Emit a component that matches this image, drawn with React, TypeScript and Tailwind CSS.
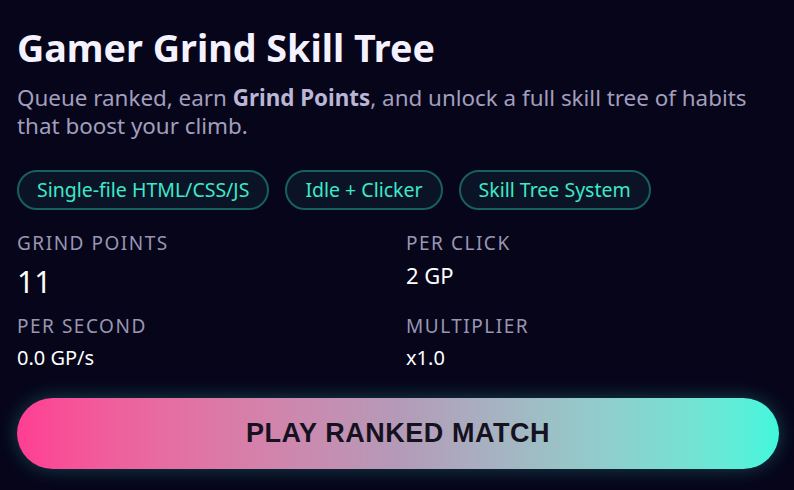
const tags = ["Single-file HTML/CSS/JS", "Idle + Clicker", "Skill Tree System"];

export default function App() {
  return (
    <div className="min-h-[490px] w-[794px] overflow-hidden bg-[#07051a] pl-[17px] pr-[15px] pt-[25px] font-['Noto_Sans',sans-serif] text-white">
      <h1 className="text-[37.7px] font-bold leading-[1.2] text-[#f4f2ff]">Gamer Grind Skill Tree</h1>
      <p className="mt-[14px] text-[22.4px] leading-[28px] text-[#a29fbd]">
        Queue ranked, earn <strong className="font-bold text-[#bab6d6]">Grind Points</strong>, and unlock a full skill tree of habits
        <br />
        that boost your climb.
      </p>

      <div className="mt-[30px] flex gap-[16px]">
        {tags.map((t) => (
          <span
            key={t}
            className="rounded-full border-2 border-[#17605f] bg-[#0a1426] px-[18px] py-[6px] text-[19.5px] leading-[24px] text-[#3ee8c9]"
          >
            {t}
          </span>
        ))}
      </div>

      <div className="mt-[21px] grid grid-cols-2 gap-x-[16px] gap-y-[14px]">
        <div>
          <div className="text-[19px] uppercase leading-[24px] tracking-[0.08em] text-[#9a96b2]">Grind Points</div>
          <div className="mt-[9px] text-[30px] leading-[36px] text-white">11</div>
        </div>
        <div>
          <div className="text-[19px] uppercase leading-[24px] tracking-[0.08em] text-[#9a96b2]">Per Click</div>
          <div className="mt-[5px] text-[22px] leading-[30px] text-white">2 GP</div>
        </div>
        <div>
          <div className="text-[19px] uppercase leading-[24px] tracking-[0.08em] text-[#9a96b2]">Per Second</div>
          <div className="mt-[6px] text-[20px] leading-[28px] text-white">0.0 GP/s</div>
        </div>
        <div>
          <div className="text-[19px] uppercase leading-[24px] tracking-[0.08em] text-[#9a96b2]">Multiplier</div>
          <div className="mt-[6px] text-[20px] leading-[28px] text-white">x1.0</div>
        </div>
      </div>

      <button className="mt-[26px] flex h-[71px] w-full items-center justify-center rounded-full bg-gradient-to-r from-[#ff3d93] via-[#b49ab8] to-[#3ff7dc] font-['Liberation_Sans',Arial,sans-serif] text-[27px] font-bold tracking-[0.02em] text-[#15111f] shadow-[0_0_20px_rgba(50,210,200,0.3)]">
        PLAY RANKED MATCH
      </button>
    </div>
  );
}
